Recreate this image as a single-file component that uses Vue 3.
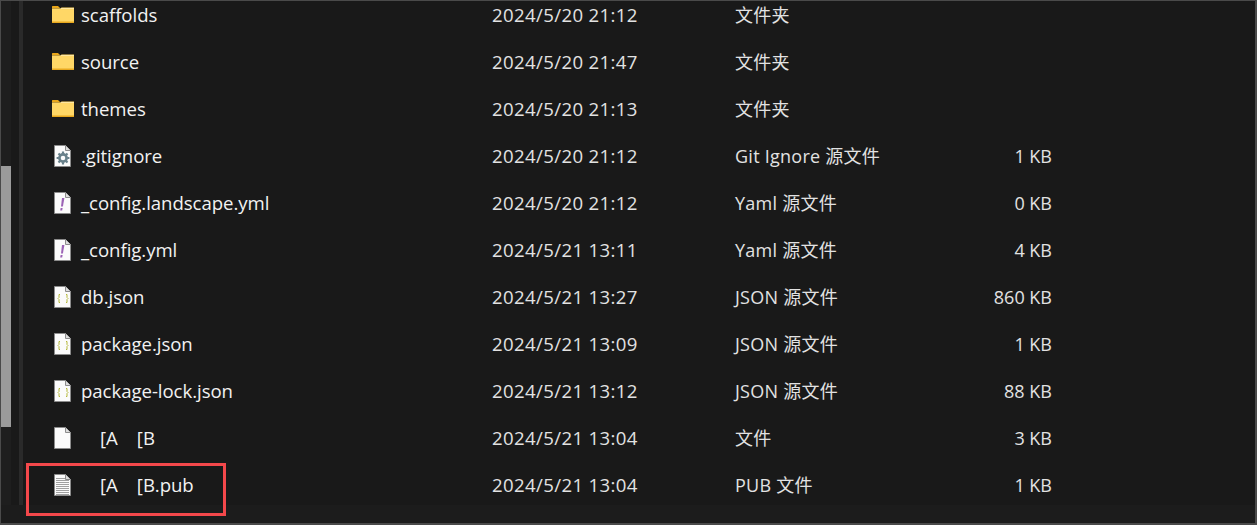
<script setup>
const sp = '\u00a0\u00a0\u00a0\u00a0'
const rows = [
  { name: 'scaffolds', date: '2024/5/20 21:12', type: '文件夹', size: '', icon: 'folder' },
  { name: 'source', date: '2024/5/20 21:47', type: '文件夹', size: '', icon: 'folder' },
  { name: 'themes', date: '2024/5/20 21:13', type: '文件夹', size: '', icon: 'folder' },
  { name: '.gitignore', date: '2024/5/20 21:12', type: 'Git Ignore 源文件', size: '1 KB', icon: 'gear' },
  { name: '_config.landscape.yml', date: '2024/5/20 21:12', type: 'Yaml 源文件', size: '0 KB', icon: 'yaml' },
  { name: '_config.yml', date: '2024/5/21 13:11', type: 'Yaml 源文件', size: '4 KB', icon: 'yaml' },
  { name: 'db.json', date: '2024/5/21 13:27', type: 'JSON 源文件', size: '860 KB', icon: 'json' },
  { name: 'package.json', date: '2024/5/21 13:09', type: 'JSON 源文件', size: '1 KB', icon: 'json' },
  { name: 'package-lock.json', date: '2024/5/21 13:12', type: 'JSON 源文件', size: '88 KB', icon: 'json' },
  { name: `[A${sp}[B`, date: '2024/5/21 13:04', type: '文件', size: '3 KB', icon: 'blank', indent: true },
  { name: `[A${sp}[B.pub`, date: '2024/5/21 13:04', type: 'PUB 文件', size: '1 KB', icon: 'text', indent: true }
]
const textLines = [6, 8, 10, 12, 14, 16, 18, 20, 22]
</script>

<template>
  <div class="window">
    <div class="body">
      <aside class="rail">
        <div class="track"><div class="thumb"></div></div>
        <div class="divider"></div>
      </aside>
      <main class="list">
        <div v-for="row in rows" :key="row.name" class="row">
          <span class="icon">
            <svg width="24" height="24" viewBox="0 0 24 24">
              <template v-if="row.icon === 'folder'">
                <path d="M2 4.5q0-.5.5-.5h5.5l2.5 2.5H2z" fill="#e9a61a" />
                <path d="M2 6.5h8.5l1-1H24V21H2z" fill="#ffd766" />
                <path d="M11 6h13v1H10.5z" fill="#ffe6a0" />
                <path d="M2 19.5h22V21H2z" fill="#e8a81e" />
              </template>
              <template v-else>
                <path d="M4.5 2.5h11l5 5v16h-16z" fill="#fbfbfb" stroke="#8c8c8c" />
                <path d="M15.5 2.5v5h5" fill="#dcdcdc" stroke="#8c8c8c" />
              </template>
              <template v-if="row.icon === 'gear'">
                <circle cx="13" cy="15" r="3.6" fill="none" stroke="#68808a" stroke-width="2.6" />
                <path d="M13 8.6v2.2M13 19.2v2.2M6.6 15h2.2M17.2 15h2.2M8.5 10.5l1.5 1.5M16 18l1.5 1.5M17.5 10.5L16 12M10 18l-1.5 1.5" stroke="#68808a" stroke-width="2.2" />
              </template>
              <template v-if="row.icon === 'yaml'">
                <path d="M12 8h2.4l-1.5 8.5h-1.9z" fill="#9b62b5" />
                <path d="M10.6 18h2l-.4 2.6h-2z" fill="#9b62b5" />
              </template>
              <template v-if="row.icon === 'json'">
                <path d="M10 10.5H9v3l-1 1 1 1v3h1M16 10.5h1v3l1 1-1 1v3h-1" fill="none" stroke="#b5b83a" stroke-width="1" />
              </template>
              <template v-if="row.icon === 'text'">
                <path
                  v-for="y in textLines"
                  :key="y"
                  :d="`M6 ${y + 0.5}H${y < 8 ? 15 : 19}`"
                  stroke="#a0a0a0"
                />
              </template>
            </svg>
          </span>
          <span class="name" :class="{ indent: row.indent }">{{ row.name }}</span>
          <span class="date">{{ row.date }}</span>
          <span class="type">{{ row.type }}</span>
          <span class="size">{{ row.size }}</span>
        </div>
      </main>
    </div>
    <div class="strip"></div>
    <div class="callout"></div>
  </div>
</template>

<style>
html, body { margin: 0; background: #191919; }
</style>

<style scoped>
.window {
  position: relative;
  width: 1257px;
  height: 525px;
  box-sizing: border-box;
  display: flex;
  flex-direction: column;
  overflow: hidden;
  background: #191919;
  border: solid #4a4a4a;
  border-width: 1px 2px 2px 1px;
  color: #f2f2f2;
  font-family: "Open Sans", "Noto Sans CJK SC", sans-serif;
  font-size: 18.6px;
}
.body { flex: 1; min-height: 0; display: flex; overflow: hidden; }
.strip { height: 18px; flex: none; background: #1c1c1c; }
.rail { width: 22px; flex: none; display: flex; }
.track { width: 10px; background: #1e1e1e; padding-top: 165px; box-sizing: border-box; }
.thumb { height: 261px; background: #9b9b9b; }
.divider { width: 4px; margin-left: 8px; background: #2a2a2a; }
.list { flex: 1; margin-top: -10px; }
.row { height: 47px; display: flex; align-items: center; }
.icon { width: 24px; height: 24px; margin-left: 27px; flex: none; align-self: flex-start; margin-top: 11px; }
.name { width: 411px; margin-left: 7px; flex: none; white-space: nowrap; letter-spacing: -0.05px; }
.indent { text-indent: 19px; }
.date { width: 243px; flex: none; letter-spacing: 0.37px; color: #e2e2e2; }
.type { width: 240px; flex: none; font-size: 18px; letter-spacing: 0.25px; color: #e2e2e2; margin-bottom: 2px; }
.size { width: 77px; flex: none; text-align: right; font-size: 18px; color: #e2e2e2; }
.callout {
  position: absolute;
  left: 25px;
  top: 462px;
  width: 200px;
  height: 53px;
  box-sizing: border-box;
  border: 3px solid #f4484b;
}
</style>
